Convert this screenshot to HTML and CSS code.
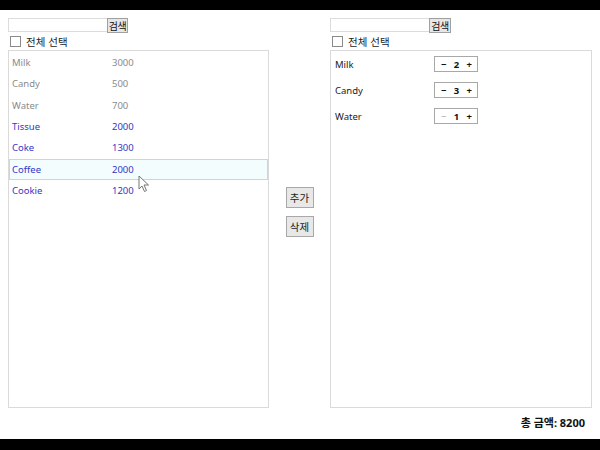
FILE: index.html
```html
<!DOCTYPE html>
<html lang="ko">
<head>
<meta charset="utf-8">
<link rel="stylesheet" href="styles.css">
</head>
<body>
<div class="bar top"></div>
<main class="stage">
  <div class="app">
    <section class="panel left">
      <div class="search"><input class="field" type="text"><button class="sbtn">검색</button></div>
      <label class="all"><span class="box"></span><span>전체 선택</span></label>
      <div class="list">
        <div class="row added"><span class="name">Milk</span><span>3000</span></div>
        <div class="row added"><span class="name">Candy</span><span>500</span></div>
        <div class="row added"><span class="name">Water</span><span>700</span></div>
        <div class="row"><span class="name">Tissue</span><span>2000</span></div>
        <div class="row"><span class="name">Coke</span><span>1300</span></div>
        <div class="row hover"><span class="name">Coffee</span><span>2000</span></div>
        <div class="row"><span class="name">Cookie</span><span>1200</span></div>
      </div>
    </section>
    <div class="mid">
      <button class="act">추가</button>
      <button class="act">삭제</button>
    </div>
    <section class="panel right">
      <div class="search"><input class="field" type="text"><button class="sbtn">검색</button></div>
      <label class="all"><span class="box"></span><span>전체 선택</span></label>
      <div class="list cart">
        <div class="crow"><span class="cname">Milk</span><span class="step"><span class="op">−</span><span class="qty">2</span><span class="op">+</span></span></div>
        <div class="crow"><span class="cname">Candy</span><span class="step"><span class="op">−</span><span class="qty">3</span><span class="op">+</span></span></div>
        <div class="crow"><span class="cname">Water</span><span class="step"><span class="op off">−</span><span class="qty">1</span><span class="op">+</span></span></div>
      </div>
    </section>
  </div>
  <div class="total">총 금액: 8200</div>
  <svg class="cursor" width="12" height="18" viewBox="0 0 12 18"><path d="M1 1 L1 14 L4 11 L6.5 16.5 L8.5 15.5 L6 10 L10.5 10 Z" fill="#fff" stroke="#666" stroke-width="0.9" stroke-linejoin="round"/></svg>
</main>
<div class="bar bottom"></div>
</body>
</html>
```
FILE: styles.css
```css
* { box-sizing: border-box; }
html, body { margin: 0; padding: 0; background: #fff; }
body {
  width: 600px;
  height: 450px;
  overflow: hidden;
  font-family: "Noto Sans", "Noto Sans CJK KR", sans-serif;
  font-size: 9.5px;
  color: #222;
}
.bar { background: #000; }
.bar.top { height: 10px; }
.bar.bottom { height: 11px; }
.stage {
  position: relative;
  height: 429px;
  padding: 8px 7px 0 8px;
}
.app { display: flex; }
.panel { display: flex; flex-direction: column; }
.panel.left { width: 261px; }
.panel.right { width: 262px; }
.search { display: flex; height: 15px; }
.field {
  width: 99px;
  height: 14px;
  margin: 0;
  padding: 0;
  border: 1px solid #dcdcdc;
  border-right: none;
  background: #fff;
  outline: none;
}
.sbtn {
  width: 21px;
  height: 15px;
  margin: 0;
  padding: 0;
  border: 1px solid #a0a0a0;
  background: #e6e6e6;
  font-family: "Noto Sans CJK KR", sans-serif;
  font-size: 10px;
  letter-spacing: -0.5px;
  line-height: 12px;
  white-space: nowrap;
  overflow: visible;
  color: #111;
}
.right .sbtn { width: 22px; }
.all {
  display: flex;
  align-items: center;
  gap: 5px;
  height: 11px;
  margin: 3px 0 0 2px;
  font-family: "Noto Sans CJK KR", sans-serif;
  font-size: 10.5px;
  color: #222;
}
.box {
  width: 11px;
  height: 11px;
  border: 1px solid #8a8a8a;
  background: #fff;
}
.list {
  margin-top: 3px;
  height: 358px;
  border: 1px solid #dadada;
  padding: 1px 0 0 0;
}
.row {
  display: flex;
  align-items: center;
  height: 21.33px;
  padding-left: 2px;
  color: #3535c8;
  border: 1px solid transparent;
}
.row.added { color: #8a8a8a; }
.row .name { width: 100px; }
.row.hover {
  background: #f3fdfe;
  border-color: #a6e4f2;
}
.cart { padding: 0; }
.crow {
  display: flex;
  align-items: center;
  height: 26px;
  padding-left: 4px;
}
.cname { width: 99px; color: #222; }
.step {
  display: flex;
  align-items: center;
  justify-content: space-between;
  width: 44px;
  height: 16px;
  padding: 0 5px 0 6px;
  border: 1px solid #a8a8a8;
  background: #fff;
  font-weight: bold;
  font-size: 9.5px;
  color: #111;
}
.op { font-weight: bold; }
.op.off { color: #aaa; font-weight: normal; }
.mid {
  width: 61px;
  display: flex;
  flex-direction: column;
  align-items: center;
  padding-top: 169px;
  gap: 8px;
}
.act {
  width: 28px;
  height: 21px;
  margin: 0;
  padding: 0;
  border: 1px solid #a8a8a8;
  background: #e8e8e8;
  font-family: "Noto Sans CJK KR", sans-serif;
  font-size: 10.5px;
  color: #222;
}
.total {
  margin-top: 6px;
  padding-right: 8px;
  text-align: right;
  font-family: "Noto Sans", "Noto Sans CJK KR", sans-serif;
  font-weight: bold;
  font-size: 11px;
  color: #111;
}
.cursor { position: absolute; left: 138px; top: 165px; }
```
